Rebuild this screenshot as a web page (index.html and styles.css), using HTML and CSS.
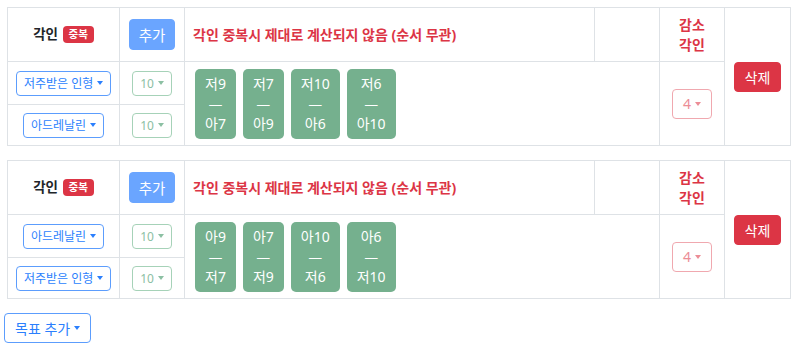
FILE: index.html
```html
<!DOCTYPE html>
<html lang="ko">

<head>
    <meta charset="UTF-8">
    <meta name="viewport" content="width=device-width, initial-scale=1.0">
    <title>각인 목표</title>
    <link rel="stylesheet" href="styles.css">
</head>

<body>
    <div class="goals">

        <!-- 목표 1 -->
        <table class="goal">
            <colgroup>
                <col class="c-name">
                <col class="c-qty">
                <col class="c-combo">
                <col class="c-empty">
                <col class="c-reduce">
                <col class="c-del">
            </colgroup>
            <tr class="head">
                <td class="name-head">각인 <span class="badge">중복</span></td>
                <td><button class="btn btn-add" disabled>추가</button></td>
                <td class="warn">각인 중복시 제대로 계산되지 않음 (순서 무관)</td>
                <td></td>
                <td class="reduce-head">감소 각인</td>
                <td rowspan="3"><button class="btn btn-delete">삭제</button></td>
            </tr>
            <tr class="row-a">
                <td><button class="btn btn-sm btn-blue dropdown">저주받은 인형</button></td>
                <td><button class="btn btn-sm btn-green dropdown" disabled>10</button></td>
                <td colspan="2" rowspan="2">
                    <div class="combos">
                        <div class="combo">저9<span class="dash">—</span>아7</div>
                        <div class="combo">저7<span class="dash">—</span>아9</div>
                        <div class="combo">저10<span class="dash">—</span>아6</div>
                        <div class="combo">저6<span class="dash">—</span>아10</div>
                    </div>
                </td>
                <td rowspan="2"><button class="btn btn-red-outline dropdown" disabled>4</button></td>
            </tr>
            <tr class="row-b">
                <td><button class="btn btn-sm btn-blue dropdown">아드레날린</button></td>
                <td><button class="btn btn-sm btn-green dropdown" disabled>10</button></td>
            </tr>
        </table>

        <!-- 목표 2 -->
        <table class="goal">
            <colgroup>
                <col class="c-name">
                <col class="c-qty">
                <col class="c-combo">
                <col class="c-empty">
                <col class="c-reduce">
                <col class="c-del">
            </colgroup>
            <tr class="head">
                <td class="name-head">각인 <span class="badge">중복</span></td>
                <td><button class="btn btn-add" disabled>추가</button></td>
                <td class="warn">각인 중복시 제대로 계산되지 않음 (순서 무관)</td>
                <td></td>
                <td class="reduce-head">감소 각인</td>
                <td rowspan="3"><button class="btn btn-delete">삭제</button></td>
            </tr>
            <tr class="row-a">
                <td><button class="btn btn-sm btn-blue dropdown">아드레날린</button></td>
                <td><button class="btn btn-sm btn-green dropdown" disabled>10</button></td>
                <td colspan="2" rowspan="2">
                    <div class="combos">
                        <div class="combo">아9<span class="dash">—</span>저7</div>
                        <div class="combo">아7<span class="dash">—</span>저9</div>
                        <div class="combo">아10<span class="dash">—</span>저6</div>
                        <div class="combo">아6<span class="dash">—</span>저10</div>
                    </div>
                </td>
                <td rowspan="2"><button class="btn btn-red-outline dropdown" disabled>4</button></td>
            </tr>
            <tr class="row-b">
                <td><button class="btn btn-sm btn-blue dropdown">저주받은 인형</button></td>
                <td><button class="btn btn-sm btn-green dropdown" disabled>10</button></td>
            </tr>
        </table>

        <button class="btn btn-goal dropdown">목표 추가</button>

    </div>
</body>

</html>
```

FILE: styles.css
```css
* {
    box-sizing: border-box;
}

body {
    margin: 0;
    font-family: "Noto Sans", "Noto Sans CJK KR", sans-serif;
    font-size: 14px;
    line-height: 1.4;
    color: #212529;
    background-color: #fff;
    word-break: keep-all;
}

.goals {
    padding-top: 7px;
}

/* Table */

.goal {
    width: 784px;
    margin: 0 0 14px 7px;
    border-collapse: collapse;
    table-layout: fixed;
}

.goal td {
    border: 1px solid #dee2e6;
    padding: 0 8px;
    text-align: center;
    vertical-align: middle;
}

.c-name { width: 112px; }
.c-qty { width: 65px; }
.c-combo { width: 410px; }
.c-empty { width: 65px; }
.c-reduce { width: 65px; }
.c-del { width: 66px; }

.head { height: 54px; }
.row-a { height: 43px; }
.row-b { height: 41px; }

.name-head {
    font-weight: 700;
    font-size: 13.5px;
}

.badge {
    display: inline-block;
    padding: 0 6px;
    margin-left: 1px;
    height: 17px;
    line-height: 17px;
    font-size: 10.5px;
    font-weight: 700;
    color: #fff;
    background-color: #dc3545;
    border-radius: 4px;
    vertical-align: 1px;
}

.warn {
    text-align: left !important;
    color: #dc3545;
    font-weight: 700;
    font-size: 14px;
    white-space: nowrap;
}

.reduce-head {
    color: #dc3545;
    font-weight: 700;
    font-size: 14px;
    line-height: 20px;
}

/* Buttons */

.btn {
    display: inline-flex;
    align-items: center;
    justify-content: center;
    font-family: inherit;
    font-size: 14px;
    border: 1px solid transparent;
    border-radius: 4px;
    background: #fff;
    padding: 0 10px;
    height: 30px;
    cursor: pointer;
    white-space: nowrap;
    vertical-align: middle;
}

.btn-sm {
    font-size: 12px;
    height: 25px;
    padding: 0 7px;
}

.dropdown::after {
    content: "";
    display: inline-block;
    margin-left: 4px;
    border-top: 4px solid;
    border-left: 3.5px solid transparent;
    border-right: 3.5px solid transparent;
}

.btn-add {
    height: 31px;
    padding: 0 9px;
    font-size: 14.5px;
    color: #fff;
    background-color: #6aa5ff;
    border-color: #6aa5ff;
}

.btn-delete {
    color: #fff;
    background-color: #dc3545;
    border-color: #dc3545;
}

.btn-blue {
    color: #2b7ffd;
    border-color: #5c9dfd;
}

.btn-green {
    color: #8cc0a3;
    border-color: #a6d2b8;
}

.btn-red-outline {
    padding: 0 10px;
    color: #ec8d96;
    border-color: #f0a8af;
}

.btn-goal {
    display: flex;
    margin-left: 4px;
    padding: 0 10px;
    color: #2b7ffd;
    border-color: #5c9dfd;
}

/* Combination cards */

.combos {
    display: flex;
    gap: 7px;
    padding-left: 2px;
}

.combo {
    padding: 5px 10px;
    line-height: 20px;
    color: #fff;
    background-color: #75b08e;
    border-radius: 5px;
    text-align: center;
}

.dash {
    display: block;
    font-family: "DejaVu Sans", sans-serif;
    font-size: 14px;
}
```
